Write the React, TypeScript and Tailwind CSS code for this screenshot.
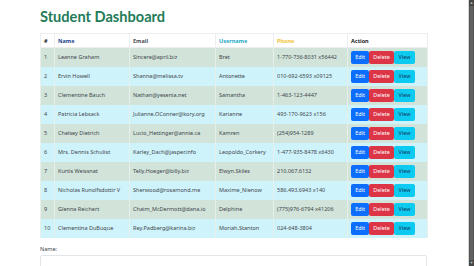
const users = [
  { id: 1, name: "Leanne Graham", email: "Sincere@april.biz", username: "Bret", phone: "1-770-736-8031 x56442" },
  { id: 2, name: "Ervin Howell", email: "Shanna@melissa.tv", username: "Antonette", phone: "010-692-6593 x09125" },
  { id: 3, name: "Clementine Bauch", email: "Nathan@yesenia.net", username: "Samantha", phone: "1-463-123-4447" },
  { id: 4, name: "Patricia Lebsack", email: "Julianne.OConner@kory.org", username: "Karianne", phone: "493-170-9623 x156" },
  { id: 5, name: "Chelsey Dietrich", email: "Lucio_Hettinger@annie.ca", username: "Kamren", phone: "(254)954-1289" },
  { id: 6, name: "Mrs. Dennis Schulist", email: "Karley_Dach@jasper.info", username: "Leopoldo_Corkery", phone: "1-477-935-8478 x6430" },
  { id: 7, name: "Kurtis Weissnat", email: "Telly.Hoeger@billy.biz", username: "Elwyn.Skiles", phone: "210.067.6132" },
  { id: 8, name: "Nicholas Runolfsdottir V", email: "Sherwood@rosamond.me", username: "Maxime_Nienow", phone: "586.493.6943 x140" },
  { id: 9, name: "Glenna Reichert", email: "Chaim_McDermott@dana.io", username: "Delphine", phone: "(775)976-6794 x41206" },
  { id: 10, name: "Clementina DuBuque", email: "Rey.Padberg@karina.biz", username: "Moriah.Stanton", phone: "024-648-3804" },
];

export default function App() {
  return (
    <div
      className="flex h-[266px] w-[474px] overflow-hidden bg-white text-[#212529]"
      style={{ fontFamily: '"Noto Sans", "Open Sans", sans-serif' }}
    >
      <div className="flex-1 pl-[40px] pr-[40px]">
        <h1
          className="mt-[8px] h-[25px] text-[14.6px] font-bold leading-[18px] text-[#237b59]"
          style={{ fontFamily: "Lato, sans-serif" }}
        >
          Student Dashboard
        </h1>

        <table className="w-[387px] table-fixed border-collapse text-[5.5px] leading-[8px]">
          <colgroup>
            <col className="w-[14px]" />
            <col className="w-[75px]" />
            <col className="w-[86px]" />
            <col className="w-[58px]" />
            <col className="w-[74px]" />
            <col className="w-[80px]" />
          </colgroup>
          <thead>
            <tr className="h-[14px] bg-white font-bold">
              <th className="border border-[#eceef0] pl-[3px] text-left">#</th>
              <th className="border border-[#eceef0] pl-[3px] text-left text-[#1a3f8a]">Name</th>
              <th className="border border-[#eceef0] pl-[3px] text-left text-[#4b5157]">Email</th>
              <th className="border border-[#eceef0] pl-[3px] text-left text-[#1fa9c7]">Username</th>
              <th className="border border-[#eceef0] pl-[3px] text-left text-[#f2c230]">Phone</th>
              <th className="border border-[#eceef0] pl-[3px] text-left text-[#212529]">Action</th>
            </tr>
          </thead>
          <tbody>
            {users.map((u) => (
              <tr key={u.id} className={`h-[19px] ${u.id % 2 === 1 ? "bg-[#d2e3da]" : "bg-[#cff3fb]"}`}>
                <td className="border-x border-[#e6efea] pl-[3px] text-[#40464c]">{u.id}</td>
                <td className="truncate border-x border-[#e6efea] pl-[3px] text-[#40464c]">{u.name}</td>
                <td className="truncate border-x border-[#e6efea] pl-[3px] text-[#40464c]">{u.email}</td>
                <td className="truncate border-x border-[#e6efea] pl-[3px] text-[#40464c]">{u.username}</td>
                <td className="truncate border-x border-[#e6efea] pl-[3px] text-[#40464c]">{u.phone}</td>
                <td className="border-x border-[#e6efea] pl-[3px]">
                  <div className="flex h-[13px] text-[5.4px]">
                    <button className="w-[18px] rounded-[2px] bg-[#0d6efd] text-white">Edit</button>
                    <button className="w-[25px] rounded-[2px] bg-[#dc3545] text-white">Delete</button>
                    <button className="w-[21px] rounded-[2px] bg-[#0dcaf0] text-[#12335a]">View</button>
                  </div>
                </td>
              </tr>
            ))}
          </tbody>
        </table>

        <div className="mt-[7px] text-[5.5px] leading-[8px] text-[#40464c]">Name:</div>
        <div className="mt-[2px] h-[20px] w-[387px] rounded-[2px] border border-[#e3e6e9] bg-white" />
      </div>

      <div className="flex w-[7px] flex-col border-l border-[#d8d8d8] bg-[#525252]">
        <div className="h-[6px] bg-[#464646] text-center text-[4px] leading-[6px] text-[#bbb]">▲</div>
        <div className="mx-[1px] flex-1 bg-[#626262]" />
        <div className="h-[6px] bg-[#464646] text-center text-[4px] leading-[6px] text-[#bbb]">▼</div>
      </div>
    </div>
  );
}
